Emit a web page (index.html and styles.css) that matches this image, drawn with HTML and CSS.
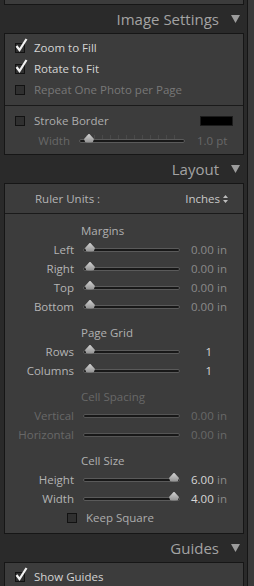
FILE: index.html
```html
<!DOCTYPE html>
<html lang="en">
  <head>
    <meta charset="UTF-8" />
    <title>Print Panels</title>
    <link rel="stylesheet" href="styles.css">
  </head>
  <body>
    <div class="side">
      <div class="panels">
        <div class="box box-top"></div>

        <!-- Image Settings -->
        <div class="head">
          <span>Image Settings</span>
          <svg class="tri" width="9" height="8" viewBox="0 0 9 8"><path d="M0 0 H9 L4.5 8 Z"/></svg>
        </div>
        <div class="box box-image">
          <div class="crow">
            <span class="cb"><svg class="tick" width="13" height="14" viewBox="0 0 13 14"><path d="M1.5 8 L4.5 12 L11.5 1"/></svg></span>
            <span class="clbl">Zoom to Fill</span>
          </div>
          <div class="crow">
            <span class="cb"><svg class="tick" width="13" height="14" viewBox="0 0 13 14"><path d="M1.5 8 L4.5 12 L11.5 1"/></svg></span>
            <span class="clbl">Rotate to Fit</span>
          </div>
          <div class="crow">
            <span class="cb"></span>
            <span class="clbl off">Repeat One Photo per Page</span>
          </div>
          <div class="sep sep-image"></div>
          <div class="crow crow-stroke">
            <span class="cb"></span>
            <span class="clbl mid">Stroke Border</span>
            <span class="swatch"></span>
          </div>
          <div class="srow srow-width">
            <span class="slbl off">Width</span>
            <span class="track ticks"><span class="thumb" style="left:4px"></span></span>
            <span class="val off">1.0 pt</span>
          </div>
        </div>

        <!-- Layout -->
        <div class="head">
          <span>Layout</span>
          <svg class="tri" width="9" height="8" viewBox="0 0 9 8"><path d="M0 0 H9 L4.5 8 Z"/></svg>
        </div>
        <div class="box box-layout">
          <div class="ruler">
            <span>Ruler Units :</span>
            <span class="units">Inches
              <svg width="5" height="8" viewBox="0 0 5 8"><path d="M0 3 L2.5 0 L5 3 Z M0 5 L2.5 8 L5 5 Z"/></svg>
            </span>
          </div>
          <div class="sep"></div>

          <div class="group">
            <div class="gtitle">Margins</div>
            <div class="srow">
              <span class="slbl">Left</span>
              <span class="track"><span class="thumb" style="left:1px"></span></span>
              <span class="val"><span class="num">0.00</span> in</span>
            </div>
            <div class="srow">
              <span class="slbl">Right</span>
              <span class="track"><span class="thumb" style="left:1px"></span></span>
              <span class="val"><span class="num">0.00</span> in</span>
            </div>
            <div class="srow">
              <span class="slbl">Top</span>
              <span class="track"><span class="thumb" style="left:1px"></span></span>
              <span class="val"><span class="num">0.00</span> in</span>
            </div>
            <div class="srow">
              <span class="slbl">Bottom</span>
              <span class="track"><span class="thumb" style="left:1px"></span></span>
              <span class="val"><span class="num">0.00</span> in</span>
            </div>
          </div>

          <div class="group">
            <div class="gtitle">Page Grid</div>
            <div class="srow">
              <span class="slbl">Rows</span>
              <span class="track"><span class="thumb" style="left:1px"></span></span>
              <span class="val"><span class="num hi">1</span></span>
            </div>
            <div class="srow">
              <span class="slbl">Columns</span>
              <span class="track"><span class="thumb" style="left:1px"></span></span>
              <span class="val"><span class="num hi">1</span></span>
            </div>
          </div>

          <div class="group disabled">
            <div class="gtitle">Cell Spacing</div>
            <div class="srow">
              <span class="slbl">Vertical</span>
              <span class="track"></span>
              <span class="val"><span class="num">0.00</span> in</span>
            </div>
            <div class="srow">
              <span class="slbl">Horizontal</span>
              <span class="track"></span>
              <span class="val"><span class="num">0.00</span> in</span>
            </div>
          </div>

          <div class="group">
            <div class="gtitle">Cell Size</div>
            <div class="srow">
              <span class="slbl">Height</span>
              <span class="track"><span class="thumb" style="left:85px"></span></span>
              <span class="val"><span class="num hi">6.00</span> in</span>
            </div>
            <div class="srow">
              <span class="slbl">Width</span>
              <span class="track"><span class="thumb" style="left:85px"></span></span>
              <span class="val"><span class="num hi">4.00</span> in</span>
            </div>
            <div class="krow">
              <span class="cb"></span>
              <span class="clbl mid">Keep Square</span>
            </div>
          </div>
        </div>

        <!-- Guides -->
        <div class="head">
          <span>Guides</span>
          <svg class="tri" width="9" height="8" viewBox="0 0 9 8"><path d="M0 0 H9 L4.5 8 Z"/></svg>
        </div>
        <div class="box box-guides">
          <div class="crow">
            <span class="cb"><svg class="tick" width="13" height="14" viewBox="0 0 13 14"><path d="M1.5 8 L4.5 12 L11.5 1"/></svg></span>
            <span class="clbl">Show Guides</span>
          </div>
        </div>
      </div>
      <div class="scroll"></div>
    </div>
  </body>
</html>
```

FILE: styles.css
```css
body {
  margin: 0;
  background: #2a2a2a;
  font-family: "Open Sans", "Liberation Sans", sans-serif;
  font-size: 11.5px;
  color: #b4b4b4;
  overflow: hidden;
}
.side {
  display: flex;
  height: 586px;
}
.panels {
  width: 247px;
  flex-shrink: 0;
}
.scroll {
  width: 7px;
  background: #393939;
  border-left: 1px solid #151515;
}
.box {
  margin: 0 3px 0 4px;
  background: #3c3c3c;
  border: 1px solid #161616;
}
.box-top {
  height: 4px;
  border-top: none;
}
.box-image {
  padding: 3px 0 4px;
}
.box-layout {
  padding-bottom: 6px;
}
.box-guides {
  padding-top: 3px;
  height: 40px;
}
.head {
  height: 28px;
  display: flex;
  justify-content: flex-end;
  align-items: center;
  padding-right: 7px;
  font-size: 15px;
  color: #a3a3a3;
}
.tri {
  margin-left: 12px;
  fill: #9c9c9c;
}

/* checkbox rows */
.crow {
  height: 21px;
  display: flex;
  align-items: center;
  padding-left: 10px;
}
.cb {
  position: relative;
  width: 8px;
  height: 8px;
  flex-shrink: 0;
  background: #303030;
  border: 1px solid #121212;
}
.tick {
  position: absolute;
  left: -1px;
  top: -6px;
  fill: none;
  stroke: #f2f2f2;
  stroke-width: 2.2;
}
.clbl {
  margin-left: 9px;
  color: #d4d4d4;
}
.clbl.off {
  color: #787878;
}
.clbl.mid {
  color: #adadad;
}
.swatch {
  margin-left: auto;
  margin-right: 10px;
  width: 31px;
  height: 8px;
  background: #000;
  border: 1px solid #1c1c1c;
}
.sep {
  border-top: 1px solid #1a1a1a;
}
.sep-image {
  margin: 5px 0 4px;
}

/* slider rows */
.srow {
  height: 19px;
  display: flex;
  align-items: center;
}
.slbl {
  width: 69px;
  text-align: right;
  flex-shrink: 0;
}
.track {
  position: relative;
  margin-left: 9px;
  width: 95px;
  height: 2px;
  background: #181818;
  border: 1px solid #5a5a5a;
  border-radius: 2px;
  flex-shrink: 0;
}
.thumb {
  position: absolute;
  top: -6px;
  width: 10px;
  height: 9px;
  background: linear-gradient(#d2d2d2, #8e8e8e);
  clip-path: polygon(50% 0, 100% 62%, 90% 100%, 10% 100%, 0 62%);
  border-radius: 0 0 4px 4px;
}
.val {
  margin-left: 11px;
  color: #8a8a8a;
}
.num {
  display: inline-block;
  width: 21px;
  text-align: right;
  margin-right: 2px;
}
.num.hi {
  color: #d6d6d6;
}
.off {
  color: #686868;
}
.srow-width .slbl {
  width: 65px;
}
.srow-width .track {
  width: 104px;
}
.srow-width .val {
  margin-left: 12px;
}
.ticks::before {
  content: "";
  position: absolute;
  left: 6px;
  right: 4px;
  top: -5px;
  height: 4px;
  background: repeating-linear-gradient(90deg, #4a4a4a 0 1px, transparent 1px 8px);
}

/* layout panel */
.ruler {
  height: 29px;
  display: flex;
  align-items: center;
  justify-content: space-between;
  padding: 0 15px 0 30px;
}
.units {
  color: #c8c8c8;
  display: flex;
  align-items: center;
  gap: 3px;
}
.units svg {
  fill: #bdbdbd;
}
.group {
  margin-top: 7px;
}
.gtitle {
  height: 19px;
  line-height: 19px;
  padding-left: 76px;
  color: #b0b0b0;
}
.disabled .gtitle,
.disabled .slbl,
.disabled .val {
  color: #686868;
}
.disabled .track {
  border-color: #555;
}
.krow {
  height: 19px;
  display: flex;
  align-items: center;
  padding-left: 62px;
}
```
